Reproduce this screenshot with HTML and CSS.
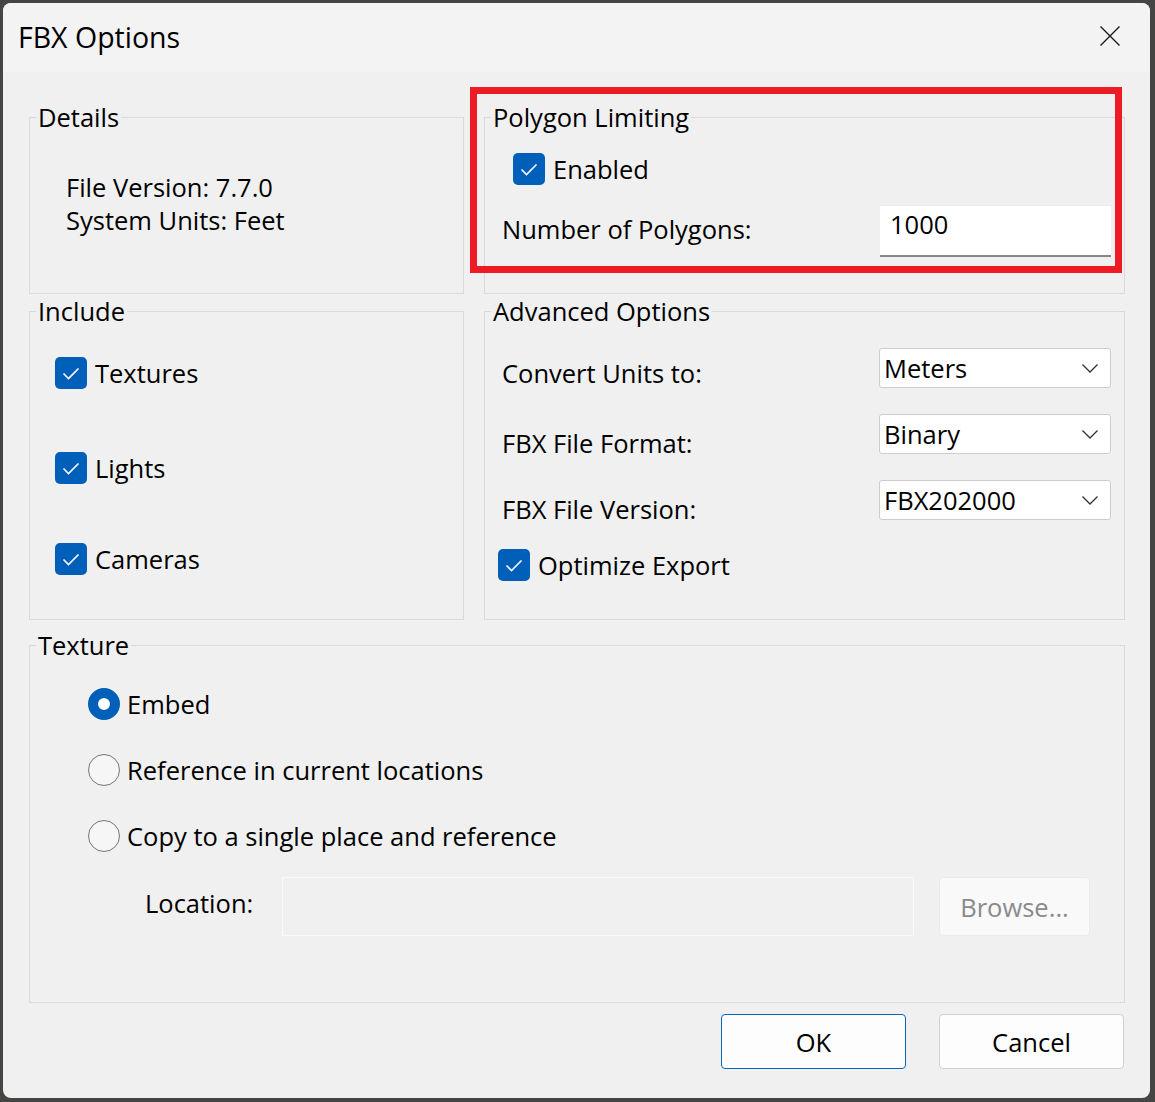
FILE: index.html
```html
<!DOCTYPE html>
<html>
<head>
  <title>FBX Options</title>
  <meta charset="UTF-8">
  <link rel="stylesheet" href="styles.css">
</head>
<body>

<div class="window">
  <div class="titlebar">
    <span class="title">FBX Options</span>
    <span class="close">
      <svg width="20" height="20" viewBox="0 0 20 20"><path d="M0.5 0.5 L19.5 19.5 M19.5 0.5 L0.5 19.5" stroke="#1c1c1c" stroke-width="1.4" fill="none"/></svg>
    </span>
  </div>

  <div class="content">
    <div class="groups">

      <fieldset class="group details">
        <legend>Details</legend>
        <div class="info">
          <div>File Version: 7.7.0</div>
          <div>System Units: Feet</div>
        </div>
      </fieldset>

      <div class="highlight-wrap">
        <fieldset class="group polygon">
          <legend>Polygon Limiting</legend>
          <label class="check">
            <span class="box"><svg width="32" height="32" viewBox="0 0 32 32"><path d="M8.5 16.5 L13.5 21.5 L23.5 11.5" stroke="#fff" stroke-width="1.6" fill="none"/></svg></span>
            Enabled
          </label>
          <div class="field-row">
            <span class="field-label">Number of Polygons:</span>
            <div class="textbox">1000</div>
          </div>
        </fieldset>
        <div class="highlight"></div>
      </div>

      <fieldset class="group include">
        <legend>Include</legend>
        <div class="check-list">
          <label class="check">
            <span class="box"><svg width="32" height="32" viewBox="0 0 32 32"><path d="M8.5 16.5 L13.5 21.5 L23.5 11.5" stroke="#fff" stroke-width="1.6" fill="none"/></svg></span>
            Textures
          </label>
          <label class="check">
            <span class="box"><svg width="32" height="32" viewBox="0 0 32 32"><path d="M8.5 16.5 L13.5 21.5 L23.5 11.5" stroke="#fff" stroke-width="1.6" fill="none"/></svg></span>
            Lights
          </label>
          <label class="check">
            <span class="box"><svg width="32" height="32" viewBox="0 0 32 32"><path d="M8.5 16.5 L13.5 21.5 L23.5 11.5" stroke="#fff" stroke-width="1.6" fill="none"/></svg></span>
            Cameras
          </label>
        </div>
      </fieldset>

      <fieldset class="group advanced">
        <legend>Advanced Options</legend>
        <div class="options">
          <div class="option-row">
            <span class="option-label first">Convert Units to:</span>
            <div class="dropdown">Meters
              <svg width="16" height="9" viewBox="0 0 16 9"><path d="M0.5 0.5 L8 8 L15.5 0.5" stroke="#333" stroke-width="1.3" fill="none"/></svg>
            </div>
          </div>
          <div class="option-row">
            <span class="option-label">FBX File Format:</span>
            <div class="dropdown">Binary
              <svg width="16" height="9" viewBox="0 0 16 9"><path d="M0.5 0.5 L8 8 L15.5 0.5" stroke="#333" stroke-width="1.3" fill="none"/></svg>
            </div>
          </div>
          <div class="option-row">
            <span class="option-label">FBX File Version:</span>
            <div class="dropdown">FBX202000
              <svg width="16" height="9" viewBox="0 0 16 9"><path d="M0.5 0.5 L8 8 L15.5 0.5" stroke="#333" stroke-width="1.3" fill="none"/></svg>
            </div>
          </div>
          <label class="check optimize">
            <span class="box"><svg width="32" height="32" viewBox="0 0 32 32"><path d="M8.5 16.5 L13.5 21.5 L23.5 11.5" stroke="#fff" stroke-width="1.6" fill="none"/></svg></span>
            Optimize Export
          </label>
        </div>
      </fieldset>

    </div>

    <fieldset class="group texture">
      <legend>Texture</legend>
      <div class="texture-body">
        <div class="radio-list">
          <label class="radio"><span class="dot selected"></span>Embed</label>
          <label class="radio"><span class="dot"></span>Reference in current locations</label>
          <label class="radio"><span class="dot"></span>Copy to a single place and reference</label>
        </div>
        <div class="location-row">
          <span class="location-label">Location:</span>
          <div class="location-input"></div>
          <div class="btn disabled">Browse...</div>
        </div>
      </div>
    </fieldset>

    <div class="buttons">
      <div class="btn default">OK</div>
      <div class="btn">Cancel</div>
    </div>
  </div>
</div>

</body>
</html>
```

FILE: styles.css
```css
body {
  background-color: #454543;
  font-family: "Open Sans", "Noto Sans", sans-serif;
  font-size: 25.5px;
  color: #000;
  margin: 0;
}

.window {
  margin: 3px 5px 4px 3px;
  height: 1095px;
  background-color: #f0f0f0;
  border-radius: 8px;
  overflow: hidden;
}

.titlebar {
  height: 69px;
  background-color: #f3f3f3;
  display: flex;
  align-items: center;
  justify-content: space-between;
  padding: 0 30px 0 15px;
}

.title {
  font-size: 28.5px;
  margin-top: -2px;
}

.close {
  display: flex;
  margin-top: -4px;
}

.content {
  padding: 30px 25px 0 26px;
}

.groups {
  display: grid;
  grid-template-columns: 435px 641px;
  grid-template-rows: 192px 324px;
  column-gap: 20px;
  row-gap: 2px;
}

.group {
  margin: 0;
  padding: 0;
  border: 1px solid #dadada;
  min-width: 0;
  box-sizing: border-box;
}

.group legend {
  padding: 0 2px;
  margin-left: 6px;
  line-height: 30px;
}

/* Details */
.details .info {
  padding: 39px 0 0 36px;
  line-height: 33px;
}

/* Polygon limiting */
.highlight-wrap {
  position: relative;
  display: flex;
}

.highlight-wrap .group {
  flex: 1;
}

.highlight {
  position: absolute;
  left: -14px;
  top: -15px;
  width: 652px;
  height: 186px;
  border: 7px solid #ed1c24;
  box-sizing: border-box;
  pointer-events: none;
}

.polygon .check {
  margin: 21px 0 0 28px;
}

.field-row {
  display: flex;
  align-items: center;
  justify-content: space-between;
  margin: 20px 13px 0 17px;
}

.field-label {
  margin-top: -4px;
}

.textbox {
  width: 231px;
  height: 52px;
  box-sizing: border-box;
  background-color: #fff;
  border-top: 1px solid #ececec;
  border-bottom: 2px solid #878787;
  padding: 1px 10px;
  line-height: 34px;
}

/* Checkboxes */
.check {
  display: flex;
  align-items: center;
  gap: 8px;
  height: 32px;
}

.box {
  width: 32px;
  height: 32px;
  border-radius: 5px;
  background-color: #005fb8;
  display: flex;
}

.check-list {
  display: flex;
  flex-direction: column;
  padding: 31px 0 0 25px;
}

.check-list .check:nth-child(2) {
  margin-top: 63px;
}

.check-list .check:nth-child(3) {
  margin-top: 59px;
}

/* Advanced options */
.options {
  padding: 22px 13px 0 17px;
}

.option-row {
  display: flex;
  justify-content: space-between;
  align-items: flex-start;
  height: 40px;
  margin-bottom: 26px;
}

.option-row:nth-child(3) {
  margin-bottom: 29px;
}

.option-label {
  line-height: 40px;
  padding-top: 9px;
}

.option-label.first {
  padding-top: 5px;
}

.dropdown {
  width: 232px;
  height: 40px;
  box-sizing: border-box;
  background-color: #fff;
  border: 1px solid #cdcdcd;
  border-radius: 3px;
  display: flex;
  align-items: center;
  justify-content: space-between;
  padding: 0 12px 0 4px;
}

.optimize {
  margin-left: -4px;
}

/* Texture */
.texture {
  margin-top: 10px;
  height: 373px;
}

.texture-body {
  padding: 28px 0 0 58px;
}

.radio-list {
  display: flex;
  flex-direction: column;
  gap: 34px;
}

.radio {
  display: flex;
  align-items: center;
  gap: 7px;
  height: 32px;
}

.dot {
  width: 32px;
  height: 32px;
  box-sizing: border-box;
  border-radius: 50%;
  border: 1.5px solid #767676;
  background-color: #f6f6f6;
}

.dot.selected {
  border: 10px solid #005fb8;
  background-color: #fff;
}

.location-row {
  display: flex;
  align-items: center;
  margin: 25px 0 0 57px;
}

.location-label {
  width: 137px;
  margin-top: -8px;
}

.location-input {
  width: 632px;
  height: 59px;
  box-sizing: border-box;
  border: 1px solid #fafafa;
  background-color: #f0f0f0;
}

.btn {
  width: 185px;
  height: 55px;
  box-sizing: border-box;
  display: flex;
  align-items: center;
  justify-content: center;
  background-color: #fdfdfd;
  border: 1px solid #d0d0d0;
  border-radius: 4px;
}

.btn.disabled {
  width: 151px;
  height: 59px;
  margin-left: 25px;
  background-color: #f9f9f9;
  border-color: #ebebeb;
  color: #8a8a8a;
}

.btn.default {
  border-color: #0067c0;
}

.buttons {
  display: flex;
  justify-content: flex-end;
  gap: 33px;
  margin: 11px 1px 0 0;
}
```
